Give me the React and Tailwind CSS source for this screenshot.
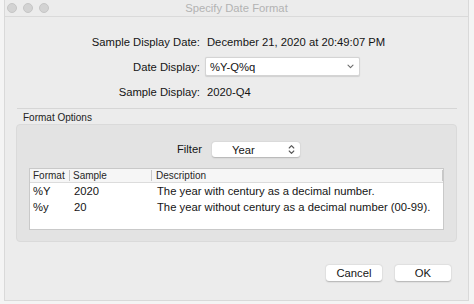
import React from "react";

function Light() {
  return <div className="w-[10px] h-[10px] rounded-full bg-[#d3d3d3] border border-[#c6c6c6]" />;
}

function Chevron() {
  return (
    <svg width="7" height="5" viewBox="0 0 7 5" className="block">
      <path d="M1 1.2 L3.5 3.6 L6 1.2" fill="none" stroke="#6b6b6b" strokeWidth="1.1" strokeLinecap="round" strokeLinejoin="round" />
    </svg>
  );
}

function UpDown() {
  return (
    <svg width="7" height="11" viewBox="0 0 7 11" className="block">
      <path d="M1.2 4 L3.5 1.6 L5.8 4" fill="none" stroke="#555" strokeWidth="1.1" strokeLinecap="round" strokeLinejoin="round" />
      <path d="M1.2 7 L3.5 9.4 L5.8 7" fill="none" stroke="#555" strokeWidth="1.1" strokeLinecap="round" strokeLinejoin="round" />
    </svg>
  );
}

export default function App() {
  const font = { fontFamily: '"Liberation Sans", Arial, sans-serif' };
  return (
    <div className="w-[474px] h-[304px] bg-[#f4f4f4] pl-[4px] text-[#141414]" style={font}>
      <div className="w-[465px] h-[301px] bg-[#ececec] border border-t-0 border-[#d9d9d9] flex flex-col">
        {/* title bar */}
        <div className="h-[17px] border-b border-[#dadada] grid grid-cols-[1fr_auto_1fr] items-center">
          <div className="flex items-center gap-[6px] pl-[2px]">
            <Light />
            <Light />
            <Light />
          </div>
          <div className="text-[11.25px] leading-[14px] text-[#b3b3b3]">Specify Date Format</div>
          <div />
        </div>

        {/* form */}
        <div className="flex flex-col pt-[18px] text-[11.25px]">
          <div className="flex h-[14px] items-center leading-[14px]">
            <div className="w-[195px] text-right">Sample Display Date:</div>
            <div className="ml-[7px]">December 21, 2020 at 20:49:07 PM</div>
          </div>
          <div className="flex h-[19px] items-center mt-[8px] leading-[14px]">
            <div className="w-[195px] text-right">Date Display:</div>
            <div className="ml-[5px] w-[155px] h-[19px] bg-white rounded-[2px] border border-[#d4d4d4] shadow-[0_0.5px_1px_rgba(0,0,0,0.12)] flex items-center pl-[4px] pr-[5px]">
              <span className="flex-1">%Y-Q%q</span>
              <Chevron />
            </div>
          </div>
          <div className="flex h-[14px] items-center mt-[9px] leading-[14px]">
            <div className="w-[195px] text-right">Sample Display:</div>
            <div className="ml-[7px]">2020-Q4</div>
          </div>
        </div>

        <div className="mt-[9px] ml-[12px] w-[440px] border-t border-[#d6d6d6]" />

        <div className="mt-[3px] ml-[18px] text-[10px] leading-[12px] text-[#222]">Format Options</div>

        {/* group box */}
        <div className="ml-[11px] w-[441px] h-[118px] bg-[#e3e3e3] border border-[#dadada] rounded-[4px] flex flex-col">
          <div className="mt-[17px] h-[15px] pl-[160px] flex items-center text-[11.25px]">
            <span>Filter</span>
            <div className="ml-[10px] w-[88px] h-[15px] bg-white rounded-[3px] shadow-[0_0.5px_1.5px_rgba(0,0,0,0.22)] flex items-center pl-[20px] pr-[5px]">
              <span className="flex-1 leading-[14px]">Year</span>
              <UpDown />
            </div>
          </div>

          {/* table */}
          <div className="mt-[11px] mx-[12px] h-[62px] bg-white border border-[#c9c9c9] flex flex-col">
            <div className="h-[14px] bg-[#f6f6f6] border-b border-[#dcdcdc] flex items-center text-[10px] leading-[12px] text-[#262626]">
              <div className="w-[40px] pl-[3px] border-r border-[#c8c8c8] h-[11px] flex items-center">Format</div>
              <div className="w-[82px] pl-[3px] border-r border-[#c8c8c8] h-[11px] flex items-center">Sample</div>
              <div className="flex-1 pl-[4px] border-r border-[#c8c8c8] h-[11px] flex items-center">Description</div>
            </div>
            <div className="flex h-[16px] items-center text-[11.25px] leading-[14px]">
              <div className="w-[40px] pl-[3px]">%Y</div>
              <div className="w-[82px] pl-[4px]">2020</div>
              <div className="flex-1 pl-[5px] whitespace-nowrap">The year with century as a decimal number.</div>
            </div>
            <div className="flex h-[16px] items-center text-[11.25px] leading-[14px]">
              <div className="w-[40px] pl-[3px]">%y</div>
              <div className="w-[82px] pl-[4px]">20</div>
              <div className="flex-1 pl-[5px] whitespace-nowrap">The year without century as a decimal number (00-99).</div>
            </div>
          </div>
        </div>

        {/* buttons */}
        <div className="mt-[23px] flex justify-end gap-[13px] pr-[17px] text-[11.25px]">
          <div className="w-[56px] h-[16px] bg-white rounded-[3px] shadow-[0_0.5px_1.5px_rgba(0,0,0,0.25)] flex items-center justify-center leading-[14px]">Cancel</div>
          <div className="w-[56px] h-[16px] bg-white rounded-[3px] shadow-[0_0.5px_1.5px_rgba(0,0,0,0.25)] flex items-center justify-center leading-[14px]">OK</div>
        </div>
      </div>
    </div>
  );
}
